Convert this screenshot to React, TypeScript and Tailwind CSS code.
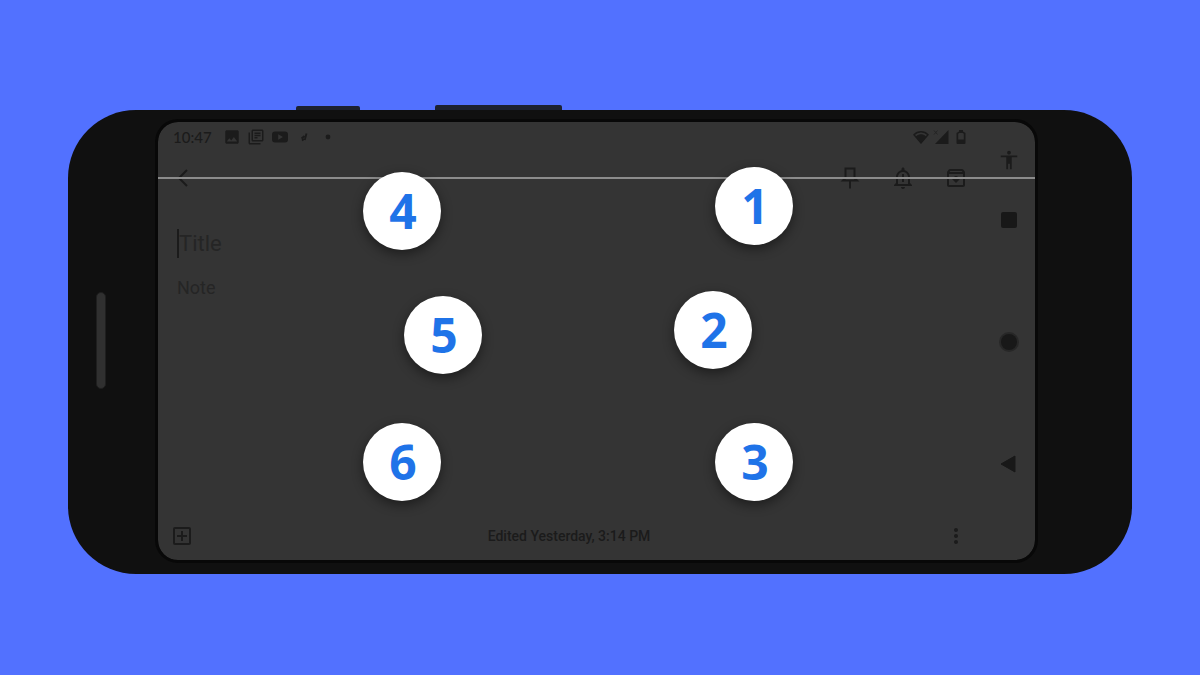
import React, { useState } from "react";
import {
  MdImage,
  MdOutlineLibraryBooks,
  MdOutlineAddAlert,
  MdOutlineArchive,
  MdOutlineAddBox,
  MdMoreVert,
  MdAccessibility,
} from "react-icons/md";

const dots = [
  { label: "4", place: "left-[205px] top-[50px]" },
  { label: "5", place: "left-[246px] top-[174px]" },
  { label: "6", place: "left-[205px] top-[301px]" },
  { label: "1", place: "left-[557px] top-[45px]" },
  { label: "2", place: "left-[516px] top-[169px]" },
  { label: "3", place: "left-[557px] top-[301px]" },
];

function StatusBar() {
  return (
    <div className="flex h-[31px] items-center justify-between pl-[15px] pr-[14px]">
      <div className="flex items-center gap-[6px]">
        <span className="w-11 font-['Lato',sans-serif] text-[15px] leading-4 font-medium">10:47</span>
        <MdImage className="size-[18px]" />
        <MdOutlineLibraryBooks className="size-[18px]" />
        <svg viewBox="0 0 18 18" className="size-[18px]" fill="currentColor">
          <path fillRule="evenodd" d="M4 3.500h10a3 3 0 0 1 3 3v5a3 3 0 0 1-3 3H4a3 3 0 0 1-3-3v-5a3 3 0 0 1 3-3Zm3.200 2.700v5.600L12 9Z" />
        </svg>
        <svg viewBox="0 0 18 18" className="size-[18px]" fill="none" stroke="currentColor" strokeWidth="1.800">
          <path d="M11.500 5.500 9.800 12M6.500 10.500l3-2.500M7 12.500l2-1.500" />
        </svg>
        <svg viewBox="0 0 18 18" className="size-[18px]" fill="currentColor">
          <circle cx="9" cy="9" r="2.400" />
        </svg>
      </div>
      <div className="flex items-center gap-1">
        <svg viewBox="0 0 16 14" className="h-[14px] w-4" fill="none" stroke="currentColor">
          <path d="M1 4.800C5 .800 11 .800 15 4.800L8 13Z" strokeWidth="1.400" />
          <path d="M3.200 6.500C6 4.300 10 4.300 12.800 6.500L8 13Z" fill="currentColor" />
        </svg>
        <svg viewBox="0 0 16 14" className="h-[14px] w-4" fill="currentColor">
          <path d="M15.500 0v14H2Z" />
          <path d="m1 .500 3.500 4m0-4-3.500 4" stroke="currentColor" strokeWidth="1" opacity=".6" />
        </svg>
        <svg viewBox="0 0 16 14" className="h-[14px] w-4" fill="currentColor">
          <path fillRule="evenodd" d="M6 0h4v1.500l2.500 1.500V13a1 1 0 0 1-1 1h-7a1 1 0 0 1-1-1V3L6 1.500ZM5.200 3.700V9.500h5.600V3.700L9.500 3h-3Z" />
        </svg>
      </div>
    </div>
  );
}

function Toolbar() {
  return (
    <div className="flex h-[50px] items-center justify-between pl-3 pr-[15px]">
      <button aria-label="Back">
        <svg viewBox="0 0 24 24" className="size-6" fill="none" stroke="currentColor" strokeWidth="2">
          <path d="m17 4-8 8 8 8" />
        </svg>
      </button>
      <div className="flex items-center gap-[29px]">
        <button aria-label="Pin">
          <svg viewBox="0 0 24 24" className="size-6" fill="none" stroke="currentColor" strokeWidth="2">
            <path d="M7.500 12V2.500h9V12l2.500 2.500H5L7.500 12M12 14.500v8" />
          </svg>
        </button>
        <button aria-label="Reminder">
          <MdOutlineAddAlert className="size-6" />
        </button>
        <button aria-label="Archive">
          <MdOutlineArchive className="size-6" />
        </button>
      </div>
    </div>
  );
}

function NavButtons() {
  return (
    <nav className="flex w-[52px] flex-col items-center pt-[27px]">
      <button aria-label="Accessibility" className="mb-[39px]">
        <MdAccessibility className="size-[22px]" />
      </button>
      <div className="flex flex-col gap-[102px]">
        <button aria-label="Overview" className="grid size-5 place-items-center">
          <span className="size-4 rounded-xs bg-[#181818]" />
        </button>
        <button aria-label="Home" className="grid size-5 place-items-center rounded-full bg-[#272727]">
          <span className="size-4 rounded-full bg-[#181818]" />
        </button>
        <button aria-label="Back" className="grid size-5 place-items-center">
          <svg viewBox="0 0 20 20" className="size-5" fill="#181818" stroke="#181818" strokeLinejoin="round">
            <path d="M2 10 16 2v16Z" />
          </svg>
        </button>
      </div>
    </nav>
  );
}

export default function App() {
  const [title, setTitle] = useState("");
  const [note, setNote] = useState("");

  return (
    <main className="flex min-h-screen items-center bg-[#5271ff] px-[68px] pt-2 font-['Roboto',sans-serif] text-[#1b1b1b]">
      <div className="relative flex w-full rounded-[68px] bg-[#101010] pt-3 pr-[97px] pb-[14px]">
        {/* side keys */}
        <div className="absolute -top-1 left-[228px] h-1 w-16 rounded-t-xs bg-[#1c2130]" />
        <div className="absolute -top-[5px] left-[367px] h-[5px] w-[127px] rounded-t-xs bg-[#1c2130]" />

        <div className="flex w-[90px] shrink-0 items-center pl-7">
          <div className="h-[97px] w-[10px] rounded-full border border-[#1f1f1f] bg-[#303030]" />
        </div>

        <div className="relative flex min-h-[438px] flex-1 rounded-[20px] bg-[#343434] outline-3 outline-[#080808]">
          <div className="flex flex-1 flex-col">
            <StatusBar />
            <Toolbar />
            <div className="flex flex-1 flex-col gap-[18px] pl-[19px] pt-[26px]">
              <input
                aria-label="Title"
                placeholder="Title"
                value={title}
                onChange={(e) => setTitle(e.target.value)}
                className="h-[29px] w-60 border-l-2 border-[#1b1b1b] text-[22px] outline-none placeholder:text-[#252525]"
              />
              <input
                aria-label="Note"
                placeholder="Note"
                value={note}
                onChange={(e) => setNote(e.target.value)}
                className="h-6 w-60 text-lg outline-none placeholder:text-[#252525]"
              />
            </div>
            <div className="flex h-12 items-center justify-between pl-3 pr-[15px]">
              <button aria-label="Add">
                <MdOutlineAddBox className="size-6" />
              </button>
              <span className="text-sm font-medium">Edited Yesterday, 3:14 PM</span>
              <button aria-label="More">
                <MdMoreVert className="size-6" />
              </button>
            </div>
          </div>
          <NavButtons />

          <div className="absolute inset-x-0 top-[55px] h-[2px] bg-[#8c8c8c]" />
          {dots.map((dot) => (
            <button
              key={dot.label}
              className={`absolute grid size-[78px] place-items-center rounded-full bg-white pl-[2px] font-['Open_Sans',sans-serif] text-5xl font-bold text-[#1f73e8] shadow-[0_4px_12px_rgba(0,0,0,0.45)] ${dot.place}`}
            >
              {dot.label}
            </button>
          ))}
        </div>
      </div>
    </main>
  );
}
